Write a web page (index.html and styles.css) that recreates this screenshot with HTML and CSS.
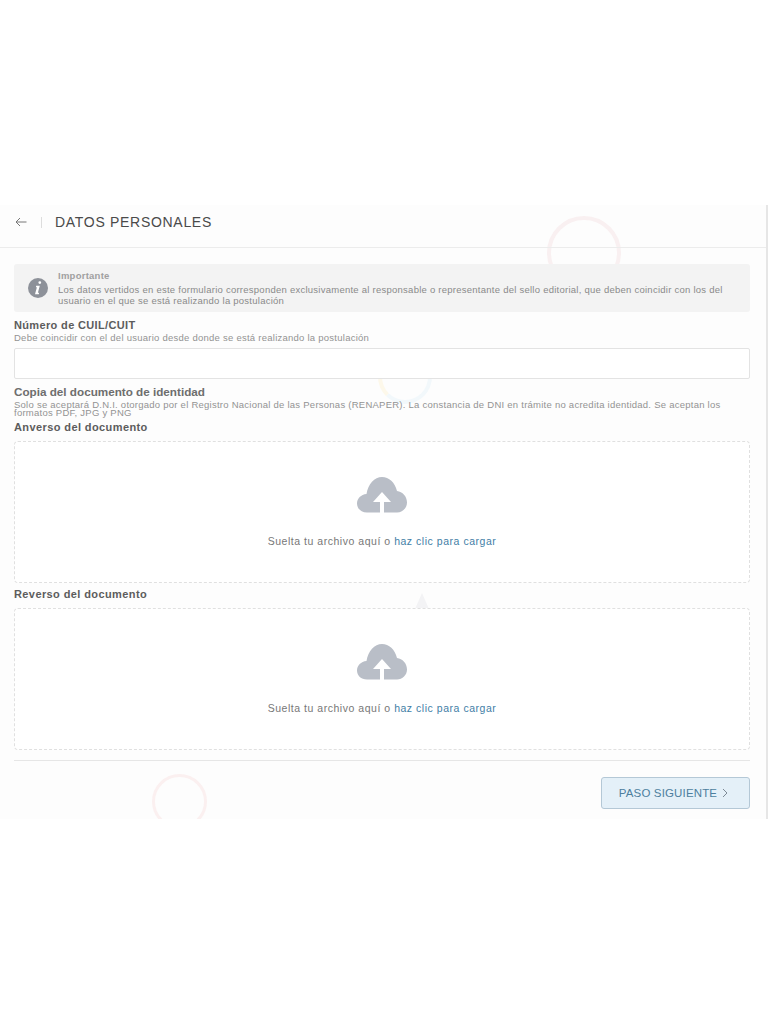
FILE: index.html
```html
<!DOCTYPE html>
<html lang="es">

<head>
    <meta charset="UTF-8">
    <meta name="viewport" content="width=device-width, initial-scale=1.0">
    <title>Datos personales</title>
    <link rel="stylesheet" href="styles.css">
</head>

<body>

    <div class="screen">
        <div class="deco deco-ring-top"></div>
        <div class="deco deco-ring-bottom"></div>
        <div class="deco deco-ring-mid"></div>
        <div class="deco deco-triangle"></div>

        <div class="header">
            <svg class="back-icon" width="12" height="10" viewBox="0 0 12 10" fill="none" stroke="#777" stroke-width="1">
                <path d="M11.5 5H1M5 1L1 5l4 4" />
            </svg>
            <span class="header-sep"></span>
            <h1>DATOS PERSONALES</h1>
        </div>

        <div class="content">
            <div class="notice">
                <svg class="info-icon" width="20" height="20" viewBox="0 0 20 20">
                    <circle cx="10" cy="10" r="10" fill="#8d9199" />
                    <path d="M11.8 3.2a1.400 1.400 0 1 1-.01 2.800 1.400 1.400 0 0 1 .01-2.800zM8.200 7.800h3.600l-1.900 7h1.200l-.3 1.400H7l1.900-7H7.900z" fill="#fff" />
                </svg>
                <div class="notice-text">
                    <p class="notice-title">Importante</p>
                    <p>Los datos vertidos en este formulario corresponden exclusivamente al responsable o representante del sello editorial, que deben coincidir con los del usuario en el que se está realizando la postulación</p>
                </div>
            </div>

            <label class="field-label" for="cuil">Número de CUIL/CUIT</label>
            <p class="hint">Debe coincidir con el del usuario desde donde se está realizando la postulación</p>
            <input class="text-input" type="text" id="cuil" name="cuil">

            <h2 class="section-title">Copia del documento de identidad</h2>
            <p class="hint hint-tight">Solo se aceptará D.N.I. otorgado por el Registro Nacional de las Personas (RENAPER). La constancia de DNI en trámite no acredita identidad. Se aceptan los formatos PDF, JPG y PNG</p>

            <p class="field-label label-doc">Anverso del documento</p>
            <div class="dropzone">
                <svg class="cloud-icon" width="50" height="36" viewBox="0 0 50 36">
                    <path d="M10 35.500C4 35.500 0 31.500 0 26.500 0 21.500 4 17.500 9.500 17 11 7 17.500 0 25 0c7 0 13 5.500 15 14C45.500 14.500 50 19.500 50 25.500 50 31 45.500 35.500 40 35.500H27V25h7L25 15l-9 10h7v10.500z" fill="#b9bec7" />
                </svg>
                <p class="drop-text">Suelta tu archivo aquí o <a href="#">haz clic para cargar</a></p>
            </div>

            <p class="field-label label-doc label-reverso">Reverso del documento</p>
            <div class="dropzone">
                <svg class="cloud-icon" width="50" height="36" viewBox="0 0 50 36">
                    <path d="M10 35.500C4 35.500 0 31.500 0 26.500 0 21.500 4 17.500 9.500 17 11 7 17.500 0 25 0c7 0 13 5.500 15 14C45.500 14.500 50 19.500 50 25.500 50 31 45.500 35.500 40 35.500H27V25h7L25 15l-9 10h7v10.500z" fill="#b9bec7" />
                </svg>
                <p class="drop-text">Suelta tu archivo aquí o <a href="#">haz clic para cargar</a></p>
            </div>

            <div class="footer">
                <button class="next-button">PASO SIGUIENTE
                    <svg width="6" height="10" viewBox="0 0 6 10" fill="none" stroke="#7d8a96" stroke-width="1">
                        <path d="M1 1l4 4-4 4" />
                    </svg>
                </button>
            </div>
        </div>
    </div>

</body>

</html>
```

FILE: styles.css
```css
body {
    font-family: "Liberation Sans", Arial, sans-serif;
    background-color: #fff;
    margin: 0;
    padding: 205px 0 0;
}

p,
h1,
h2 {
    margin: 0;
}

.screen {
    position: relative;
    overflow: hidden;
    box-sizing: border-box;
    width: 768px;
    height: 614px;
    background: #fdfdfd;
    border-right: 2px solid #e6e6e6;
}

.deco {
    position: absolute;
    box-sizing: border-box;
    border-radius: 50%;
}

.deco-ring-top {
    left: 547px;
    top: 11px;
    width: 74px;
    height: 74px;
    border: 4px solid #f9f0f1;
}

.deco-ring-bottom {
    left: 152px;
    top: 569px;
    width: 55px;
    height: 55px;
    border: 3px solid #fbf0f0;
}

.deco-ring-mid {
    left: 378px;
    top: 145px;
    width: 54px;
    height: 54px;
    border: 4px solid #f2f8fb;
    border-left-color: #fdf8ea;
}

.deco-triangle {
    left: 415px;
    top: 388px;
    width: 0;
    height: 0;
    border-radius: 0;
    border-left: 7px solid transparent;
    border-right: 7px solid transparent;
    border-bottom: 16px solid #f3f3f5;
}

.header {
    position: relative;
    display: flex;
    align-items: center;
    box-sizing: border-box;
    height: 43px;
    padding: 0 0 8px 15px;
    border-bottom: 1px solid #ececec;
}

.back-icon {
    margin-right: 14px;
}

.header-sep {
    width: 1px;
    height: 11px;
    margin-right: 13px;
    background: #ddd;
}

h1 {
    font-size: 14px;
    font-weight: normal;
    color: #4a4a4a;
    letter-spacing: 0.7px;
}

.content {
    position: relative;
    padding: 16px 16px 0 14px;
}

.notice {
    display: flex;
    align-items: center;
    box-sizing: border-box;
    height: 48px;
    padding: 0 14px 1px;
    background: #f3f3f3;
    border-radius: 3px;
}

.info-icon {
    flex: none;
    margin-right: 10px;
}

.notice-text {
    font-size: 9.5px;
    line-height: 11px;
    color: #8a8a8a;
    letter-spacing: 0.25px;
}

.notice-title {
    margin-bottom: 2px;
    line-height: 12px;
    font-weight: bold;
    color: #a0a0a0;
}

.field-label {
    display: block;
    height: 12px;
    margin-top: 7px;
    font-size: 11px;
    font-weight: bold;
    line-height: 12px;
    color: #5c5c5c;
    letter-spacing: 0.35px;
}

.hint {
    font-size: 9.5px;
    line-height: 14px;
    color: #939393;
    letter-spacing: 0.25px;
}

.hint-tight {
    line-height: 8px;
    padding-top: 2px;
}

.text-input {
    display: block;
    box-sizing: border-box;
    width: 736px;
    height: 31px;
    margin-top: 3px;
    background: #fff;
    border: 1px solid #e3e3e3;
    border-radius: 2px;
}

.section-title {
    margin-top: 6px;
    font-size: 11.7px;
    font-weight: bold;
    line-height: 14px;
    color: #6e6e6e;
}

.label-doc {
    margin-top: 4px;
    letter-spacing: 0.4px;
}

.label-reverso {
    margin-top: 5px;
}

.dropzone {
    display: flex;
    flex-direction: column;
    align-items: center;
    box-sizing: border-box;
    width: 736px;
    height: 142px;
    margin-top: 8px;
    padding-top: 35px;
    background: #fff;
    border: 1px dashed #e0e0e0;
    border-radius: 4px;
}

.drop-text {
    margin-top: 21px;
    font-size: 10.5px;
    line-height: 14px;
    color: #777;
    letter-spacing: 0.53px;
}

.drop-text a {
    color: #3f7ea6;
    text-decoration: none;
}

.footer {
    display: flex;
    justify-content: flex-end;
    width: 736px;
    margin-top: 10px;
    padding-top: 16px;
    border-top: 1px solid #e6e6e6;
}

.next-button {
    display: flex;
    align-items: center;
    justify-content: center;
    gap: 5px;
    box-sizing: border-box;
    width: 149px;
    height: 32px;
    padding: 0 4px 0 0;
    font-family: inherit;
    font-size: 11.5px;
    color: #4d7f9e;
    letter-spacing: 0.15px;
    background: #e4f0f8;
    border: 1px solid #b4c8d6;
    border-radius: 3px;
}
```
